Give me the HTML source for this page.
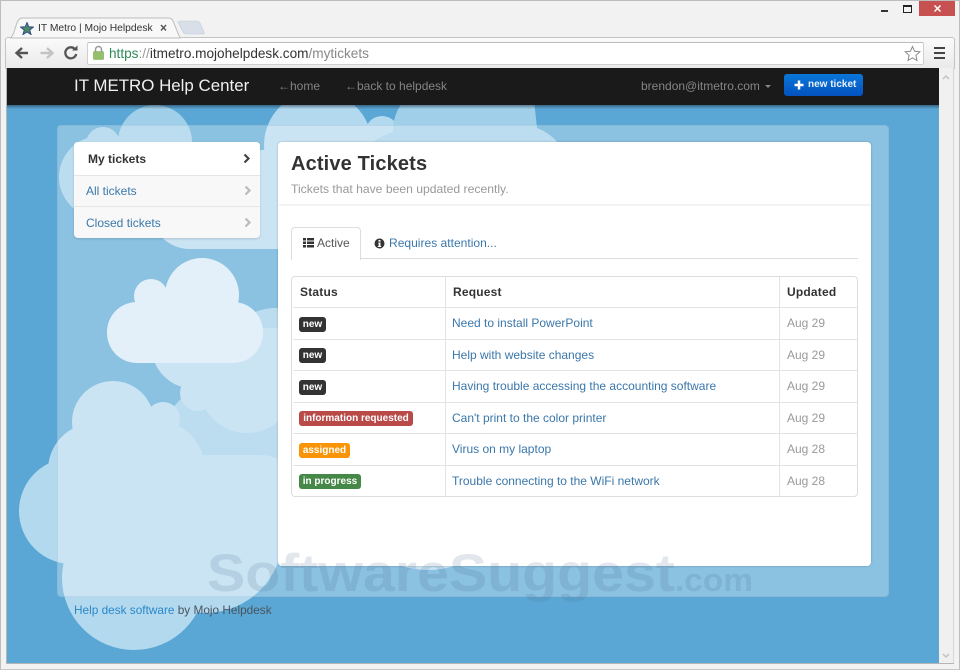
<!DOCTYPE html>
<html><head><meta charset="utf-8"><title>IT Metro | Mojo Helpdesk</title>
<style>
html,body{margin:0;padding:0;width:960px;height:670px;overflow:hidden;background:#f2f2f2;font-family:"Liberation Sans",sans-serif}
.a{position:absolute;white-space:nowrap}
.lnk{color:#3b78ab}
.r{left:452px;font-size:12px;color:#3a77aa;height:31px;line-height:31px}
.d{left:787px;font-size:12px;color:#999;height:31px;line-height:31px}
.l{left:299px;height:15px;line-height:16px;border-radius:3px;color:#fff;font-size:10px;font-weight:bold;text-align:center}
.hl{left:293px;width:564px;height:1px;background:#e3e3e3}
.th{font-size:12px;font-weight:bold;color:#333;top:284px;line-height:16px;letter-spacing:.2px}
</style></head><body>
<div class="a" style="left:0;top:0;width:958px;height:668px;border:1px solid #bdbdbd;border-bottom-color:#c8c8c8;background:#f2f2f2"></div>

<!-- window controls -->
<div class="a" style="left:881px;top:10px;width:7px;height:2px;background:#333"></div>
<div class="a" style="left:903px;top:5px;width:7px;height:5px;border:1px solid #222;border-top-width:2px"></div>
<div class="a" style="left:919px;top:1px;width:36px;height:15px;background:#c75050"></div>
<svg class="a" style="left:933px;top:4px" width="9" height="9"><path d="M1.500 1.500L7.500 7.500M7.500 1.500L1.500 7.500" stroke="#fff" stroke-width="1.500"/></svg>

<!-- toolbar & tabs -->
<div class="a" style="left:5px;top:37px;height:31px;background:linear-gradient(#fbfbfb,#e9e9e9);border:1px solid #c4c4c4;border-bottom:0;border-radius:3px 3px 0 0;width:948px"></div>
<svg class="a" style="left:5px;top:16px" width="210" height="24">
<path d="M5 22C10 20 10 6 15 2.500Q16 2 18 2H163Q167 2 168 5L175 22Z" fill="#f8f8f8" stroke="#bdbdbd"/>
<path d="M174 21.500H210" stroke="#c4c4c4"/>
<path d="M173 6Q173 5 176 5H191Q194 5 195 7L199 16Q200 18 197 18H182Q179 18 178 16Z" fill="#d8dfe8" stroke="#c4ccd6" stroke-width=".6"/>
</svg>
<svg class="a" style="left:20px;top:22px" width="14" height="13" viewBox="0 0 16 15"><path d="M8 .5L10 5.500L15.500 5.800L11.200 9.200L12.700 14.500L8 11.500L3.300 14.500L4.800 9.200L.5 5.800L6 5.500Z" fill="#4d8a6a" stroke="#2d4d86" stroke-width="1.100"/></svg>
<div class="a" style="left:38px;top:22px;font-size:10.300px;line-height:13px;color:#333">IT Metro | Mojo Helpdesk</div>
<svg class="a" style="left:160px;top:24px" width="7" height="8"><path d="M1 1L6 6.500M6 1L1 6.500" stroke="#555" stroke-width="1.400"/></svg>
<svg class="a" style="left:14px;top:46px" width="16" height="14"><path d="M14 7H3M8 2L2.500 7L8 12" fill="none" stroke="#555" stroke-width="2.400"/></svg>
<svg class="a" style="left:39px;top:46px" width="16" height="14"><path d="M1.500 7H13M8 2L13.500 7L8 12" fill="none" stroke="#c3c3c3" stroke-width="2.400"/></svg>
<svg class="a" style="left:63px;top:45px" width="16" height="16"><path d="M12.200 4.500A5.500 5.500 0 1 0 13.200 9" fill="none" stroke="#555" stroke-width="2.300"/><path d="M9 5.500H14.500V0.500Z" fill="#555"/></svg>
<div class="a" style="left:87px;top:42px;width:835px;height:21px;background:#fff;border:1px solid #cfcfcf;border-top-color:#bbb;border-radius:2px"></div>
<svg class="a" style="left:92px;top:45px" width="13" height="16"><path d="M3.500 7V4.500a3 3 0 0 1 6 0V7" fill="none" stroke="#999" stroke-width="1.500"/><rect x="1.500" y="6.500" width="10" height="8" rx="1" fill="#93c06a" stroke="#7aa456" stroke-width=".6"/></svg>
<div class="a" style="left:109px;top:46px;font-size:13.600px;line-height:16px;color:#333"><span style="color:#2e8b57">https</span><span style="color:#999">://</span>itmetro.mojohelpdesk.com<span style="color:#888">/mytickets</span></div>
<svg class="a" style="left:904px;top:45px" width="17" height="17" viewBox="0 0 17 17"><path d="M8.500 1.500L10.600 6.300L15.800 6.800L11.900 10.300L13 15.500L8.500 12.800L4 15.500L5.100 10.300L1.200 6.800L6.400 6.300Z" fill="#fff" stroke="#8b8b8b"/></svg>
<div class="a" style="left:934px;top:47px;width:11px;height:2px;background:#444;box-shadow:0 5px 0 #444,0 10px 0 #444"></div>

<!-- page -->
<div class="a" id="page" style="left:7px;top:68px;width:932px;height:595px;background:#5aa6d4;overflow:hidden">
<svg class="a" style="left:-7px;top:-68px" width="960" height="670" viewBox="0 0 960 670">
 <g fill="#a0cfe9">
  <circle cx="155" cy="142" r="37"/><circle cx="103" cy="144" r="17"/><circle cx="100" cy="177" r="41"/><rect x="100" y="150" width="120" height="80"/>
  <circle cx="240" cy="460" r="85"/>
  <circle cx="275" cy="358" r="50"/>
 </g>
 <g fill="#b3d9ef">
  <circle cx="72" cy="511" r="53"/><circle cx="95" cy="470" r="47"/><circle cx="155" cy="470" r="50"/><circle cx="113" cy="422" r="41"/><circle cx="163" cy="419" r="17"/>
  <path d="M64 455H260Q285 455 290 480V540H205L64 565Z"/>
  <circle cx="134" cy="578" r="72"/><circle cx="205" cy="535" r="78"/>
  <circle cx="195" cy="345" r="44"/><circle cx="198" cy="393" r="18"/><circle cx="247" cy="385" r="48"/><rect x="190" y="328" width="100" height="57"/>
  <circle cx="318" cy="145" r="54"/><circle cx="382" cy="133" r="17"/><rect x="310" y="130" width="60" height="30"/>
  <rect x="190" y="150" width="110" height="99"/><circle cx="190" cy="209" r="40"/>
  <ellipse cx="428" cy="520" rx="66" ry="50"/>
 </g>
 <path fill="#a0cfe9" d="M372 143Q380 136 393 132Q393 112 405 100H534L537 128Q550 133 558 143Z"/>
</svg>
<div class="a" style="left:50px;top:57px;width:830px;height:470px;background:rgba(255,255,255,.3);border:1px solid rgba(120,160,190,.22);border-radius:4px"></div>
<svg class="a" style="left:-7px;top:-68px" width="400" height="400"><g fill="#e3f0f9"><circle cx="202" cy="295" r="37"/><circle cx="151" cy="296" r="17"/><rect x="107" y="302" width="156" height="61" rx="30"/></g></svg>
<div class="a" style="left:0;top:37px;width:932px;height:4px;background:linear-gradient(rgba(20,40,60,.5),rgba(20,40,60,0))"></div>
<div class="a" style="left:0;top:0;width:932px;height:37px;background:#1a1a1a"></div>
</div>

<!-- nav -->
<div class="a" style="left:74px;top:74px;font-size:16.900px;line-height:24px;color:#f0f0f0">IT METRO Help Center</div>
<div class="a" style="left:278px;top:78px;font-size:12px;line-height:16px;color:#848484">←home</div>
<div class="a" style="left:345px;top:78px;font-size:12px;line-height:16px;color:#848484">←back to helpdesk</div>
<div class="a" style="left:641px;top:78px;font-size:12px;line-height:16px;color:#858585">brendon@itmetro.com</div>
<div class="a" style="left:765px;top:85px;width:0;height:0;border:3.500px solid transparent;border-top:3px solid #888;border-bottom:0"></div>
<div class="a" style="left:784px;top:74px;width:79px;height:22px;background:linear-gradient(#0a77d8,#0352c0);border-radius:3px;border:0"></div>
<svg class="a" style="left:794px;top:80px" width="10" height="10"><path d="M5 .5V9.500M.5 5H9.500" stroke="#fff" stroke-width="2.500"/></svg>
<div class="a" style="left:808px;top:78px;font-size:10px;line-height:14px;font-weight:bold;color:#e8f0fa">new ticket</div>

<!-- side menu -->
<div class="a" style="left:74px;top:142px;width:186px;height:96px;background:#f8f8f8;border-radius:4px;box-shadow:0 1px 2px rgba(0,0,0,.15)"></div>
<div class="a" style="left:74px;top:142px;width:186px;height:33px;background:#fff;border-radius:4px 4px 0 0"></div>
<div class="a" style="left:74px;top:175px;width:186px;height:1px;background:#e5e5e5"></div>
<div class="a" style="left:74px;top:206px;width:186px;height:1px;background:#e5e5e5"></div>
<div class="a" style="left:88px;top:151px;font-size:12px;line-height:16px;font-weight:bold;color:#333">My tickets</div>
<div class="a lnk" style="left:86px;top:183px;font-size:12px;line-height:16px">All tickets</div>
<div class="a lnk" style="left:86px;top:215px;font-size:12px;line-height:16px">Closed tickets</div>
<svg class="a" style="left:243px;top:153px" width="8" height="11"><path d="M1.500 1.500L5.500 5.500L1.500 9.500" fill="none" stroke="#444" stroke-width="2.200"/></svg>
<svg class="a" style="left:244px;top:185px" width="8" height="11"><path d="M1.500 1.500L5.500 5.500L1.500 9.500" fill="none" stroke="#bbb" stroke-width="2.200"/></svg>
<svg class="a" style="left:244px;top:217px" width="8" height="11"><path d="M1.500 1.500L5.500 5.500L1.500 9.500" fill="none" stroke="#bbb" stroke-width="2.200"/></svg>

<!-- main -->
<div class="a" style="left:278px;top:142px;width:593px;height:424px;background:#fff;border-radius:4px;box-shadow:0 0 2px rgba(0,0,0,.22)"></div>
<div class="a" style="left:291px;top:152px;font-size:20px;line-height:24px;font-weight:bold;color:#333;letter-spacing:.15px">Active Tickets</div>
<div class="a" style="left:291px;top:181px;font-size:12.170px;line-height:16px;color:#999">Tickets that have been updated recently.</div>
<div class="a" style="left:279px;top:204px;width:592px;height:2px;background:#f3f3f3"></div>

<!-- tabs -->
<div class="a" style="left:291px;top:258px;width:567px;height:1px;background:#ddd"></div>
<div class="a" style="left:291px;top:227px;width:68px;height:32px;background:#fff;border:1px solid #ddd;border-bottom:0;border-radius:4px 4px 0 0"></div>
<svg class="a" style="left:303px;top:238px" width="11" height="10"><path d="M0 0H3V2.500H0ZM4 0H11V2.500H4ZM0 3.500H3V6H0ZM4 3.500H11V6H4ZM0 7H3V9.500H0ZM4 7H11V9.500H4Z" fill="#333"/></svg>
<div class="a" style="left:317px;top:235px;font-size:12px;line-height:16px;color:#555">Active</div>
<svg class="a" style="left:374px;top:238px" width="11" height="11"><circle cx="5.500" cy="5.500" r="5" fill="#333"/><path d="M4.500 2H6.500V3.600H4.500ZM4.300 4.500H6.500V8H7.200V9H3.800V8H4.600V5.400H4.300Z" fill="#fff"/></svg>
<div class="a lnk" style="left:389px;top:235px;font-size:12.050px;line-height:16px">Requires attention...</div>

<!-- table -->
<div class="a" style="left:291px;top:276px;width:565px;height:219px;border:1px solid #ddd;border-radius:4px"></div>
<div class="a" style="left:445px;top:277px;width:1px;height:219px;background:#e3e3e3"></div>
<div class="a" style="left:779px;top:277px;width:1px;height:219px;background:#e3e3e3"></div>
<div class="a th" style="left:300px">Status</div>
<div class="a th" style="left:453px">Request</div>
<div class="a th" style="left:787px">Updated</div>
<div class="a hl" style="top:307px"></div><div class="a hl" style="top:339px"></div><div class="a hl" style="top:370px"></div><div class="a hl" style="top:402px"></div><div class="a hl" style="top:433px"></div><div class="a hl" style="top:465px"></div>

<div class="a l" style="top:317px;width:27px;background:#333">new</div>
<div class="a r" style="top:308px">Need to install PowerPoint</div><div class="a d" style="top:308px">Aug 29</div>
<div class="a l" style="top:348px;width:27px;background:#333">new</div>
<div class="a r" style="top:340px">Help with website changes</div><div class="a d" style="top:340px">Aug 29</div>
<div class="a l" style="top:380px;width:27px;background:#333">new</div>
<div class="a r" style="top:371px">Having trouble accessing the accounting software</div><div class="a d" style="top:371px">Aug 29</div>
<div class="a l" style="top:411px;width:114px;background:#b94a48">information requested</div>
<div class="a r" style="top:403px">Can't print to the color printer</div><div class="a d" style="top:403px">Aug 29</div>
<div class="a l" style="top:443px;width:51px;background:#f89406">assigned</div>
<div class="a r" style="top:434px">Virus on my laptop</div><div class="a d" style="top:434px">Aug 28</div>
<div class="a l" style="top:474px;width:62px;background:#468847">in progress</div>
<div class="a r" style="top:466px">Trouble connecting to the WiFi network</div><div class="a d" style="top:466px">Aug 28</div>

<!-- footer -->
<div class="a" style="left:74px;top:602px;font-size:11.820px;line-height:16px;color:#4a5560"><span style="color:#2a88c8">Help desk software</span> by Mojo Helpdesk</div>

<!-- scrollbar -->
<div class="a" style="left:939px;top:68px;width:14px;height:595px;background:#f0f0f0;border-right:1px solid #d6d6d6"></div>
<svg class="a" style="left:942px;top:74px" width="8" height="6"><path d="M1 5L4 2L7 5" fill="none" stroke="#c2c2c2" stroke-width="1.500"/></svg>
<svg class="a" style="left:942px;top:653px" width="8" height="6"><path d="M1 1L4 4L7 1" fill="none" stroke="#c2c2c2" stroke-width="1.500"/></svg>
<div class="a" style="left:6px;top:663px;width:948px;height:1px;background:#b5b5b5"></div>
<div class="a" style="left:6px;top:68px;width:1px;height:595px;background:#b5b5b5"></div>

<!-- watermark -->
<svg class="a" style="left:0;top:0;pointer-events:none" width="960" height="670">
<text x="207" y="591" font-family="Liberation Sans, sans-serif" font-size="53" font-weight="bold" fill="#50708c" fill-opacity=".17" textLength="468" lengthAdjust="spacingAndGlyphs">SoftwareSuggest</text>
<text x="675" y="591" font-family="Liberation Sans, sans-serif" font-size="32" font-weight="bold" fill="#50708c" fill-opacity=".17" textLength="78" lengthAdjust="spacingAndGlyphs">.com</text>
</svg>
</body></html>
